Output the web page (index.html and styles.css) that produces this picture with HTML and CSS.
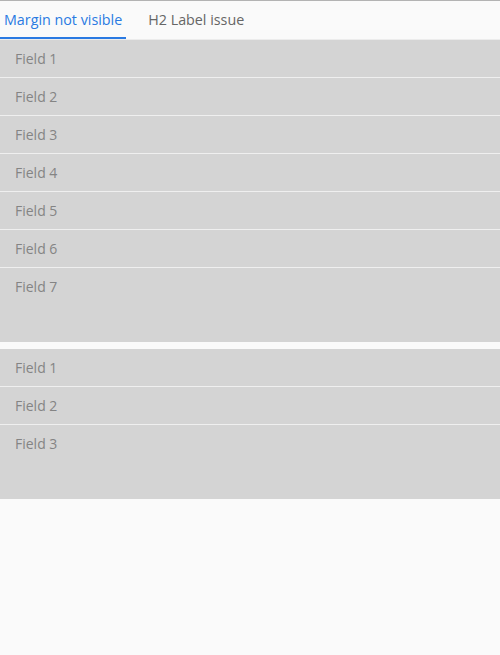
FILE: index.html
```html
<!DOCTYPE html>
<html>
<head>
<meta charset="utf-8">
<link rel="stylesheet" href="styles.css">
</head>
<body>
<div class="tabs">
  <div class="tab active">Margin not visible</div>
  <div class="tab">H2 Label issue</div>
</div>
<div class="section">
  <div class="row">Field 1</div>
  <div class="row">Field 2</div>
  <div class="row">Field 3</div>
  <div class="row">Field 4</div>
  <div class="row">Field 5</div>
  <div class="row">Field 6</div>
  <div class="row">Field 7</div>
</div>
<div class="section">
  <div class="row">Field 1</div>
  <div class="row">Field 2</div>
  <div class="row">Field 3</div>
</div>
</body>
</html>
```
FILE: styles.css
```css
html, body {
  margin: 0;
  padding: 0;
  background: #fafafa;
  font-family: "Open Sans", "Noto Sans", sans-serif;
}
.tabs {
  display: flex;
  border-top: 1px solid #b3b3b3;
  height: 38px;
  border-bottom: 1px solid #ececec;
}
.tab {
  height: 38px;
  box-sizing: border-box;
  padding: 0 4px;
  display: flex;
  align-items: center;
  font-size: 14.3px;
  color: #666;
  border-bottom: 2px solid transparent;
  padding-top: 1px;
}
.tab.active {
  color: #2a7ae2;
  border-bottom-color: #2a7ae2;
  margin-right: 18px;
}
.section {
  background: #d4d4d4;
  padding-bottom: 37px;
  margin-bottom: 7px;
}
.row {
  height: 37px;
  box-sizing: content-box;
  padding-left: 15px;
  display: flex;
  align-items: center;
  font-size: 14px;
  font-weight: 500;
  color: #848484;
  border-bottom: 1px solid #efefef;
}
.row:last-child {
  border-bottom: none;
}
```
